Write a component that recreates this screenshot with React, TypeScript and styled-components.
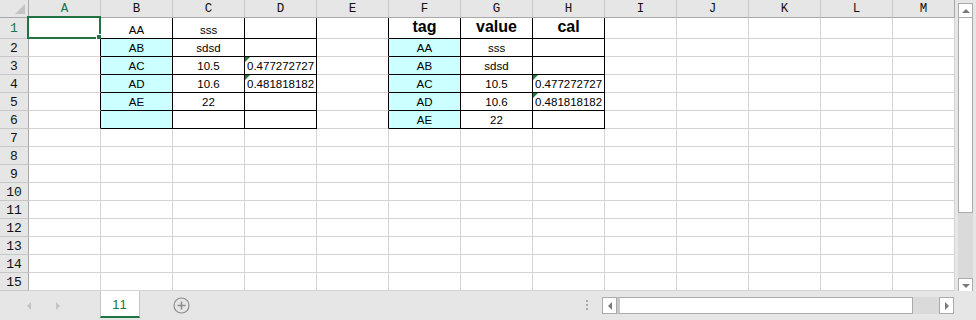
import React from 'react'
import styled, { createGlobalStyle } from 'styled-components'

const GlobalStyle = createGlobalStyle`
  html, body {
    margin: 0;
    padding: 0;
    background: #ffffff;
  }
  body {
    font-family: "Liberation Sans", Arial, sans-serif;
  }
`

const GREEN = '#217346'
const GRID = '#d4d4d4'
const BLACK = '#000000'

const COLS = ['A', 'B', 'C', 'D', 'E', 'F', 'G', 'H', 'I', 'J', 'K', 'L', 'M']
const ROW_COUNT = 15

interface CellData {
  v: string
  left?: boolean
  bold?: boolean
  fill?: boolean
  tri?: boolean
}

const DATA: Record<string, CellData> = {
  B1: { v: 'AA' },
  C1: { v: 'sss' },
  B2: { v: 'AB', fill: true },
  C2: { v: 'sdsd' },
  B3: { v: 'AC', fill: true },
  C3: { v: '10.5' },
  D3: { v: '0.477272727', left: true, tri: true },
  B4: { v: 'AD', fill: true },
  C4: { v: '10.6' },
  D4: { v: '0.481818182', left: true, tri: true },
  B5: { v: 'AE', fill: true },
  C5: { v: '22' },
  B6: { v: '', fill: true },

  F1: { v: 'tag', bold: true },
  G1: { v: 'value', bold: true },
  H1: { v: 'cal', bold: true },
  F2: { v: 'AA', fill: true },
  G2: { v: 'sss' },
  F3: { v: 'AB', fill: true },
  G3: { v: 'sdsd' },
  F4: { v: 'AC', fill: true },
  G4: { v: '10.5' },
  H4: { v: '0.477272727', left: true, tri: true },
  F5: { v: 'AD', fill: true },
  G5: { v: '10.6' },
  H5: { v: '0.481818182', left: true, tri: true },
  F6: { v: 'AE', fill: true },
  G6: { v: '22' },
}

// bordered tables: column index ranges, rows 1..6
const TABLES = [
  { from: 1, to: 3 },
  { from: 5, to: 7 },
]

const inTable = (c: number, r: number) =>
  r <= 6 && TABLES.some((t) => c >= t.from && c <= t.to)

const leftOfTable = (c: number, r: number) =>
  r <= 6 && TABLES.some((t) => c + 1 === t.from)

export default function App() {
  const cells: React.ReactNode[] = []

  cells.push(
    <Corner key="corner">
      <CornerMark />
    </Corner>,
  )
  COLS.forEach((col, i) => (
    cells.push(
      <ColHeader key={'h' + col} $active={i === 0} $last={i === COLS.length - 1}>
        {col}
      </ColHeader>,
    )
  ))

  for (let r = 1; r <= ROW_COUNT; r++) {
    cells.push(
      <RowHeader key={'r' + r} $active={r === 1}>
        {r}
      </RowHeader>,
    )
    COLS.forEach((col, c) => {
      const data = DATA[col + r]
      const right = inTable(c, r) || leftOfTable(c, r) ? BLACK : GRID
      const bottom = inTable(c, r) ? BLACK : GRID
      cells.push(
        <Cell
          key={col + r}
          $right={right}
          $bottom={bottom}
          $fill={!!data?.fill}
          $left={!!data?.left}
          $bold={!!data?.bold}
        >
          {data?.tri && <ErrorMark />}
          {data?.v}
          {col === 'A' && r === 1 && (
            <Selection>
              <Handle />
            </Selection>
          )}
        </Cell>,
      )
    })
  }

  return (
    <>
      <GlobalStyle />
      <Window>
        <Main>
          <Sheet>{cells}</Sheet>
          <VScroll>
            <ScrollButton>
              <ArrowUp />
            </ScrollButton>
            <VThumb />
            <Track />
            <ScrollButton>
              <ArrowDown />
            </ScrollButton>
          </VScroll>
        </Main>
        <TabBar>
          <NavArrows>
            <NavLeft />
            <NavRight />
          </NavArrows>
          <SheetTab>11</SheetTab>
          <AddSheet>
            <svg width="17" height="17" viewBox="0 0 17 17">
              <circle cx="8.5" cy="8.5" r="7.5" fill="none" stroke="#8c8c8c" strokeWidth="1.2" />
              <path d="M8.5 4.5v8M4.5 8.5h8" stroke="#8c8c8c" strokeWidth="1.6" />
            </svg>
          </AddSheet>
          <Spacer />
          <Grip>
            <i />
            <i />
            <i />
          </Grip>
          <HScroll>
            <HButton>
              <ArrowLeft />
            </HButton>
            <HThumb />
            <HTrack />
            <HButton>
              <ArrowRight />
            </HButton>
          </HScroll>
          <Corner2 />
        </TabBar>
      </Window>
    </>
  )
}

const Window = styled.div`
  width: 976px;
  height: 320px;
  display: flex;
  flex-direction: column;
  overflow: hidden;
  background: #e6e6e6;
`

const Main = styled.div`
  display: flex;
  height: 291px;
`

const Sheet = styled.div`
  display: grid;
  grid-template-columns: 29px repeat(12, 72px) 62px;
  grid-template-rows: 18px 21px repeat(14, 18px);
  width: 955px;
  background: #ffffff;
`

const Corner = styled.div`
  position: relative;
  box-sizing: border-box;
  background: #e6e6e6;
  border-right: 1px solid #a8a8a8;
  border-bottom: 1px solid #a8a8a8;
`

const CornerMark = styled.div`
  position: absolute;
  right: 3px;
  bottom: 3px;
  width: 0;
  height: 0;
  border-left: 10px solid transparent;
  border-bottom: 10px solid #c3c3c3;
`

const ColHeader = styled.div<{ $active: boolean; $last: boolean }>`
  box-sizing: border-box;
  display: flex;
  align-items: center;
  justify-content: center;
  background: #e6e6e6;
  border-right: 1px solid ${(p) => (p.$last ? '#a8a8a8' : '#c8c8c8')};
  border-bottom: 1px solid #a8a8a8;
  font-family: "Liberation Mono", "DejaVu Sans Mono", monospace;
  font-size: 12.5px;
  line-height: 14px;
  padding-top: 1px;
  color: ${(p) => (p.$active ? GREEN : '#111111')};
`

const RowHeader = styled.div<{ $active: boolean }>`
  box-sizing: border-box;
  display: flex;
  align-items: center;
  justify-content: center;
  background: #e6e6e6;
  border-right: 1px solid #a8a8a8;
  border-bottom: 1px solid #c8c8c8;
  font-family: "Liberation Mono", "DejaVu Sans Mono", monospace;
  font-size: 13px;
  line-height: 14px;
  padding-top: 2px;
  color: ${(p) => (p.$active ? GREEN : '#111111')};
`

const Cell = styled.div<{
  $right: string
  $bottom: string
  $fill: boolean
  $left: boolean
  $bold: boolean
}>`
  position: relative;
  box-sizing: border-box;
  display: flex;
  align-items: flex-end;
  justify-content: ${(p) => (p.$left ? 'flex-start' : 'center')};
  padding: 0 0 ${(p) => (p.$bold ? '2px' : '1px')} ${(p) => (p.$left ? '2px' : '0')};
  border-right: 1px solid ${(p) => p.$right};
  border-bottom: 1px solid ${(p) => p.$bottom};
  background: ${(p) => (p.$fill ? '#ccffff' : '#ffffff')};
  font-family: "Liberation Sans", Arial, sans-serif;
  font-size: ${(p) => (p.$bold ? '16px' : '11.5px')};
  font-weight: ${(p) => (p.$bold ? 700 : 400)};
  line-height: ${(p) => (p.$bold ? '18px' : '14px')};
  color: #000000;
  white-space: nowrap;
`

const ErrorMark = styled.span`
  position: absolute;
  left: 0;
  top: 0;
  width: 0;
  height: 0;
  border-top: 5px solid #1a7f37;
  border-right: 5px solid transparent;
`

const Selection = styled.div`
  position: absolute;
  left: -2px;
  top: -2px;
  width: 74px;
  height: 23px;
  box-sizing: border-box;
  border: 2px solid ${GREEN};
  pointer-events: none;
`

const Handle = styled.div`
  position: absolute;
  right: -4px;
  bottom: -4px;
  width: 5px;
  height: 5px;
  background: ${GREEN};
  border: 1px solid #ffffff;
`

const VScroll = styled.div`
  width: 15px;
  margin: 3px 0 0 3px;
  display: flex;
  flex-direction: column;
  height: 290px;
`

const ScrollButton = styled.div`
  box-sizing: border-box;
  height: 15px;
  flex: none;
  display: flex;
  align-items: center;
  justify-content: center;
  background: #ffffff;
  border: 1px solid #ababab;
`

const VThumb = styled.div`
  box-sizing: border-box;
  height: 195px;
  background: #ffffff;
  border: 1px solid #ababab;
  border-top: none;
`

const Track = styled.div`
  flex: 1;
  background: #dadada;
`

const ArrowUp = styled.span`
  width: 0;
  height: 0;
  border-left: 4px solid transparent;
  border-right: 4px solid transparent;
  border-bottom: 4px solid #7a7a7a;
`

const ArrowDown = styled.span`
  width: 0;
  height: 0;
  border-left: 4px solid transparent;
  border-right: 4px solid transparent;
  border-top: 4px solid #7a7a7a;
`

const ArrowLeft = styled.span`
  width: 0;
  height: 0;
  border-top: 4px solid transparent;
  border-bottom: 4px solid transparent;
  border-right: 4px solid #7a7a7a;
`

const ArrowRight = styled.span`
  width: 0;
  height: 0;
  border-top: 4px solid transparent;
  border-bottom: 4px solid transparent;
  border-left: 4px solid #7a7a7a;
`

const TabBar = styled.div`
  flex: 1;
  display: flex;
  align-items: stretch;
  background: #e6e6e6;
`

const NavArrows = styled.div`
  width: 100px;
  display: flex;
  align-items: center;
  gap: 25px;
  padding-left: 27px;
  box-sizing: border-box;
`

const NavLeft = styled.span`
  width: 0;
  height: 0;
  border-top: 4px solid transparent;
  border-bottom: 4px solid transparent;
  border-right: 4px solid #c4c4c4;
`

const NavRight = styled.span`
  width: 0;
  height: 0;
  border-top: 4px solid transparent;
  border-bottom: 4px solid transparent;
  border-left: 4px solid #c4c4c4;
`

const SheetTab = styled.div`
  box-sizing: border-box;
  width: 40px;
  height: 27px;
  display: flex;
  align-items: center;
  justify-content: center;
  background: #ffffff;
  border-left: 1px solid #c6c6c6;
  border-right: 1px solid #c6c6c6;
  border-bottom: 2px solid ${GREEN};
  font-family: "Liberation Sans", Arial, sans-serif;
  font-size: 13px;
  letter-spacing: 1px;
  color: ${GREEN};
  padding-top: 1px;
`

const AddSheet = styled.div`
  margin-left: 33px;
  display: flex;
  align-items: center;
  padding-bottom: 1px;
`

const Spacer = styled.div`
  flex: 1;
`

const Grip = styled.div`
  width: 16px;
  display: flex;
  flex-direction: column;
  align-items: flex-start;
  justify-content: center;
  gap: 2px;
  padding-bottom: 2px;

  i {
    display: block;
    width: 2px;
    height: 2px;
    background: #aaaaaa;
  }
`

const HScroll = styled.div`
  width: 352px;
  height: 17px;
  margin-top: 6px;
  display: flex;
`

const HButton = styled.div`
  box-sizing: border-box;
  width: 15px;
  flex: none;
  display: flex;
  align-items: center;
  justify-content: center;
  background: #ffffff;
  border: 1px solid #ababab;
`

const HThumb = styled.div`
  box-sizing: border-box;
  width: 296px;
  background: #ffffff;
  border: 1px solid #ababab;
  border-left: 3px solid #c8c8c8;
`

const HTrack = styled.div`
  flex: 1;
  background: #dadada;
`

const Corner2 = styled.div`
  width: 22px;
`
